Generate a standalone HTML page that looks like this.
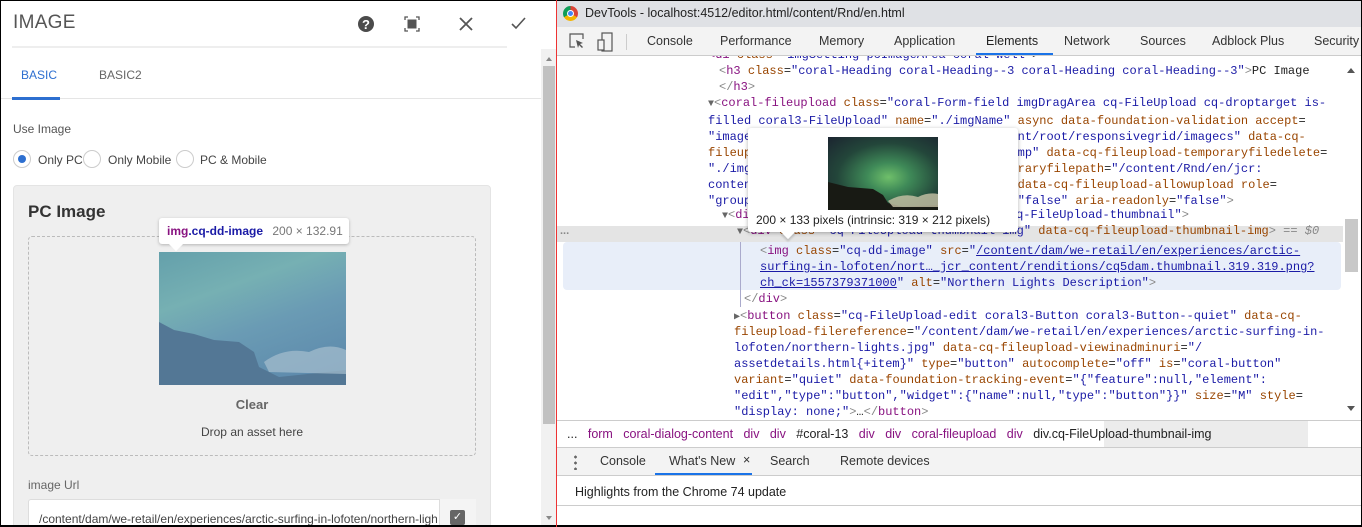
<!DOCTYPE html>
<html><head><meta charset="utf-8"><style>
*{margin:0;padding:0;box-sizing:border-box}
body{width:1362px;height:527px;overflow:hidden;background:#000;font-family:"Liberation Sans",sans-serif;position:relative}
.a{position:absolute}
#L{left:1px;top:1px;width:555px;height:524px;background:#fff;overflow:hidden}
#R{left:557px;top:1px;width:804px;height:524px;background:#fff;overflow:hidden}
.code{font-family:"Liberation Mono",monospace;font-size:12px;white-space:pre;color:#222;line-height:16px}
.t{color:#881280}.n{color:#994500}.v{color:#1a1aa6}.g{color:#888}
.u{color:#1a1aa6;text-decoration:underline}
.tri{color:#666;font-size:10px}
</style></head><body>
<div id="L" class="a">
  <div class="a" style="left:12px;top:11px;font-size:19px;color:#555;letter-spacing:0.3px">IMAGE</div>
  <svg class="a" style="left:356px;top:14px" width="18" height="18" viewBox="0 0 18 18"><circle cx="9" cy="9" r="8" fill="#4b4b4b"/><text x="9" y="14" text-anchor="middle" font-family="Liberation Sans" font-weight="bold" font-size="13" fill="#fff">?</text></svg>
  <svg class="a" style="left:403px;top:15px" width="16" height="16" viewBox="0 0 16 16"><path d="M1 4V1h3M12 1h3v3M15 12v3h-3M4 15H1v-3" stroke="#555" stroke-width="1.3" fill="none"/><rect x="3.5" y="3.5" width="9" height="9" fill="#555"/></svg>
  <svg class="a" style="left:458px;top:16px" width="14" height="14" viewBox="0 0 14 14"><path d="M1 1L13 13M13 1L1 13" stroke="#555" stroke-width="1.8"/></svg>
  <svg class="a" style="left:510px;top:16px" width="15" height="13" viewBox="0 0 15 13"><path d="M1 7l4 4L14 1" stroke="#555" stroke-width="1.6" fill="none"/></svg>
  <div class="a" style="left:11px;top:45px;width:495px;height:2px;background:#eee"></div>
  <div class="a" style="left:20px;top:67px;font-size:12px;color:#2d6fd0">BASIC</div>
  <div class="a" style="left:98px;top:67px;font-size:12px;color:#666">BASIC2</div>
  <div class="a" style="left:0;top:97px;width:540px;height:1px;background:#e5e5e5"></div>
  <div class="a" style="left:11px;top:96px;width:48px;height:3px;background:#2d6fd0"></div>
  <div class="a" style="left:12px;top:121px;font-size:12px;color:#555">Use Image</div>
  <div class="a" style="left:12px;top:149px;width:18px;height:18px;border-radius:50%;border:1px solid #ccc;background:#fff"></div>
  <div class="a" style="left:17px;top:154px;width:8px;height:8px;border-radius:50%;background:#2d6fd0"></div>
  <div class="a" style="left:37px;top:152px;font-size:12px;color:#444">Only PC</div>
  <div class="a" style="left:82px;top:149px;width:18px;height:18px;border-radius:50%;border:1px solid #ccc;background:#fff"></div>
  <div class="a" style="left:107px;top:152px;font-size:12px;color:#444">Only Mobile</div>
  <div class="a" style="left:175px;top:149px;width:18px;height:18px;border-radius:50%;border:1px solid #ccc;background:#fff"></div>
  <div class="a" style="left:199px;top:152px;font-size:12px;color:#444">PC &amp; Mobile</div>
  <div class="a" style="left:12px;top:184px;width:478px;height:360px;background:#efefef;border-radius:4px;border:1px solid #e4e4e4"></div>
  <div class="a" style="left:27px;top:201px;font-size:17px;color:#333;font-weight:bold">PC Image</div>
  <div class="a" style="left:27px;top:235px;width:448px;height:220px;border:1px dashed #bbb;border-radius:4px"></div>
  <div class="a" style="left:158px;top:251px;width:187px;height:133px;background:linear-gradient(160deg,#64a0ab 0%,#76b0b3 30%,#6a9bb4 55%,#5a85aa 100%)"></div>
  <svg class="a" style="left:158px;top:251px" width="187" height="133" viewBox="0 0 187 133"><path d="M0 70L15 78L35 82L55 88L80 90L95 100L100 115L120 125L187 118V133H0Z" fill="#537795"/><path d="M105 110Q125 95 150 100Q170 90 187 98V122L110 120Z" fill="#a6bfce" opacity=".7"/></svg>
  <div class="a" style="left:0;top:396px;width:502px;text-align:center;font-size:13px;font-weight:bold;color:#666">Clear</div>
  <div class="a" style="left:0;top:424px;width:502px;text-align:center;font-size:12px;color:#444">Drop an asset here</div>
  <div class="a" style="left:27px;top:477px;font-size:12px;color:#666">image Url</div>
  <div class="a" style="left:27px;top:498px;width:448px;height:40px;background:#fff;border:1px solid #ddd;border-radius:3px"></div>
  <div class="a" style="left:438px;top:498px;width:37px;height:40px;border-left:1px solid #ddd;background:#f4f4f4"></div>
  <div class="a" style="left:449px;top:509px;width:15px;height:15px;background:#666;border-radius:2px;color:#fff;font-size:11px;text-align:center;line-height:15px">✓</div>
  <div class="a" style="left:38px;top:511px;width:398px;overflow:hidden;white-space:nowrap;font-size:12px;color:#444">/content/dam/we-retail/en/experiences/arctic-surfing-in-lofoten/northern-lights</div>
  <div class="a" style="left:158px;top:217px;width:190px;height:26px;background:#fff;border-radius:3px;box-shadow:0 1px 3px rgba(0,0,0,.25);font-size:12px;line-height:26px;padding-left:8px;white-space:nowrap"><b style="color:#881280">img</b><b style="color:#1a1aa6">.cq-dd-image</b> <span style="color:#777;margin-left:6px">200 × 132.91</span></div>
  <div class="a" style="left:170px;top:238px;width:10px;height:10px;background:#fff;transform:rotate(45deg)"></div>
  <div class="a" style="left:540px;top:48px;width:15px;height:476px;background:#f1f1f1"></div>
  <div class="a" style="left:542px;top:65px;width:12px;height:358px;background:#c1c1c1"></div>
  <div class="a" style="left:545px;top:53px;width:0;height:0;border:3px solid transparent;border-bottom:4px solid #888"></div>
  <div class="a" style="left:545px;top:515px;width:0;height:0;border:3px solid transparent;border-top:4px solid #888"></div>
</div>
<div class="a" style="left:556px;top:0;width:1px;height:527px;background:#e33"></div>
<div id="R" class="a">
  <div class="a" style="left:0;top:0;width:804px;height:26px;background:#dfe1e5"></div>
  <div class="a" style="left:6px;top:5px;width:15px;height:15px;border-radius:50%;background:conic-gradient(#db4437 0 120deg,#f4b400 120deg 240deg,#0f9d58 240deg)"></div>
  <div class="a" style="left:10px;top:9px;width:7px;height:7px;border-radius:50%;background:#4285f4;border:1px solid #fff"></div>
  <div class="a" style="left:28px;top:5px;font-size:12.5px;color:#222">DevTools - localhost:4512/editor.html/content/Rnd/en.html</div>
  <div class="a" style="left:0;top:26px;width:804px;height:29px;background:#f3f3f3;border-bottom:1px solid #ccc"></div>
  <svg class="a" style="left:12px;top:32px" width="16" height="16" viewBox="0 0 16 16"><path d="M6 14H1V1h13v5" stroke="#555" stroke-width="1.2" fill="none"/><path d="M7 7l7 3-3 1 3 3-1 1-3-3-1 3z" fill="#555"/></svg>
  <svg class="a" style="left:40px;top:31px" width="16" height="20" viewBox="0 0 16 20"><rect x="5" y="1" width="10" height="18" stroke="#555" stroke-width="1.2" fill="none"/><rect x="1" y="8" width="6" height="10" stroke="#555" stroke-width="1.2" fill="#f3f3f3"/></svg>
  <div class="a" style="left:69px;top:33px;width:1px;height:16px;background:#ccc"></div>
  <div class="a" style="top:33px;left:0;font-size:12.5px;color:#333;white-space:nowrap">
    <span class="a" style="left:90px">Console</span><span class="a" style="left:163px">Performance</span><span class="a" style="left:262px">Memory</span><span class="a" style="left:337px">Application</span><span class="a" style="left:429px;color:#222">Elements</span><span class="a" style="left:507px">Network</span><span class="a" style="left:583px">Sources</span><span class="a" style="left:655px">Adblock Plus</span><span class="a" style="left:757px">Security</span>
  </div>
  <div class="a" style="left:419px;top:52px;width:77px;height:2px;background:#1a73e8"></div>
  <div class="a" style="left:0;top:55px;width:804px;height:364px;overflow:hidden">
   <div class="a" style="left:0;top:-55px;width:804px;height:480px">
  <div class="a" style="left:0;top:225px;width:786px;height:16px;background:#e4e4e4"></div>
  <div class="a" style="left:6px;top:241px;width:778px;height:48px;background:#e8eef9;border-radius:4px"></div>
  <div class="a" style="left:183px;top:241px;width:1px;height:65px;background:#aac"></div>
  <div class="a g" style="left:3px;top:224px;font-size:11px;font-weight:bold">...</div>
  <div class="a code" style="left:151px;top:46px"><span class="t">&lt;di</span> <span class="n">class</span>=<span class="v">"imgSetting pcImageArea coral-Well"</span>&gt;</div>
  <div class="a code" style="left:162px;top:62px"><span class="g">&lt;</span><span class="t">h3</span> <span class="n">class</span>=<span class="v">"coral-Heading coral-Heading--3 coral-Heading coral-Heading--3"</span><span class="g">&gt;</span>PC Image</div>
  <div class="a code" style="left:162px;top:78px"><span class="g">&lt;/</span><span class="t">h3</span><span class="g">&gt;</span></div>
  <div class="a code" style="left:151px;top:94px"><span class="tri">▼</span><span class="g">&lt;</span><span class="t">coral-fileupload</span> <span class="n">class</span>=<span class="v">"coral-Form-field imgDragArea cq-FileUpload cq-droptarget is-</span>
<span class="v">filled coral3-FileUpload"</span> <span class="n">name</span>=<span class="v">"./imgName"</span> <span class="n">async data-foundation-validation accept</span>=
<span class="v">"image/*"</span> <span class="n">data-cq-fileupload-target</span>=<span class="v">"/content/root/responsivegrid/imagecs"</span> <span class="n">data-cq-</span>
<span class="n">fileupload-temporaryfilename</span>=<span class="v">"./imgName.sftmp"</span> <span class="n">data-cq-fileupload-temporaryfiledelete</span>=
<span class="v">"./imgName@Delete"</span> <span class="n">data-cq-fileupload-temporaryfilepath</span>=<span class="v">"/content/Rnd/en/jcr:</span>
<span class="v">content/root/responsivegrid/imgName.sftmp"</span> <span class="n">data-cq-fileupload-allowupload</span> <span class="n">role</span>=
<span class="v">"group"</span> <span class="n">aria-required</span>=<span class="v">"false"</span> <span class="n">aria-invalid</span>=<span class="v">"false"</span> <span class="n">aria-readonly</span>=<span class="v">"false"</span><span class="g">&gt;</span></div>
  <div class="a code" style="left:165px;top:206px"><span class="tri">▼</span><span class="g">&lt;</span><span class="t">div</span> <span class="n">class</span>=<span class="v">"coral-FileUpload-thumbnail cq-FileUpload-thumbnail"</span><span class="g">&gt;</span></div>
  <div class="a code" style="left:180px;top:222px"><span class="tri">▼</span><span class="g">&lt;</span><span class="t">div</span> <span class="n">class</span>=<span class="v">"cq-FileUpload-thumbnail-img"</span> <span class="n">data-cq-fileupload-thumbnail-img</span><span class="g">&gt;</span> <span class="g"><i>== $0</i></span></div>
  <div class="a code" style="left:203px;top:242px"><span class="g">&lt;</span><span class="t">img</span> <span class="n">class</span>=<span class="v">"cq-dd-image"</span> <span class="n">src</span>=<span class="v">"</span><span class="u">/content/dam/we-retail/en/experiences/arctic-</span>
<span class="u">surfing-in-lofoten/nort…_jcr_content/renditions/cq5dam.thumbnail.319.319.png?</span>
<span class="u">ch_ck=1557379371000</span><span class="v">"</span> <span class="n">alt</span>=<span class="v">"Northern Lights Description"</span><span class="g">&gt;</span></div>
  <div class="a code" style="left:187px;top:290px"><span class="g">&lt;/</span><span class="t">div</span><span class="g">&gt;</span></div>
  <div class="a code" style="left:177px;top:307px"><span class="tri">▶</span><span class="g">&lt;</span><span class="t">button</span> <span class="n">class</span>=<span class="v">"cq-FileUpload-edit coral3-Button coral3-Button--quiet"</span> <span class="n">data-cq-</span></div>
  <div class="a code" style="left:177px;top:323px"><span class="n">fileupload-filereference</span>=<span class="v">"/content/dam/we-retail/en/experiences/arctic-surfing-in-</span>
<span class="v">lofoten/northern-lights.jpg"</span> <span class="n">data-cq-fileupload-viewinadminuri</span>=<span class="v">"/</span>
<span class="v">assetdetails.html{+item}"</span> <span class="n">type</span>=<span class="v">"button"</span> <span class="n">autocomplete</span>=<span class="v">"off"</span> <span class="n">is</span>=<span class="v">"coral-button"</span>
<span class="n">variant</span>=<span class="v">"quiet"</span> <span class="n">data-foundation-tracking-event</span>=<span class="v">"{"feature":null,"element":</span>
<span class="v">"edit","type":"button","widget":{"name":null,"type":"button"}}"</span> <span class="n">size</span>=<span class="v">"M"</span> <span class="n">style</span>=
<span class="v">"display: none;"</span><span class="g">&gt;</span>…<span class="g">&lt;/</span><span class="t">button</span><span class="g">&gt;</span></div>
   </div>
  </div>
  <div class="a" style="left:786px;top:56px;width:18px;height:363px;background:#fff"></div>
  <div class="a" style="left:788px;top:218px;width:13px;height:53px;background:#c8c8c8"></div>
  <div class="a" style="left:790px;top:63px;width:0;height:0;border:4px solid transparent;border-bottom:5px solid #555"></div>
  <div class="a" style="left:790px;top:405px;width:0;height:0;border:4px solid transparent;border-top:5px solid #555"></div>
  <div class="a" style="left:191px;top:127px;width:270px;height:104px;background:#fff;border-radius:3px;box-shadow:0 1px 4px rgba(0,0,0,.3)"></div>
  <div class="a" style="left:226px;top:226px;width:10px;height:10px;background:#fff;transform:rotate(45deg);box-shadow:2px 2px 2px rgba(0,0,0,.15)"></div>
  <div class="a" style="left:271px;top:136px;width:110px;height:73px;background:radial-gradient(ellipse at 55% 55%,#6fbf6a 0%,#3f8a58 25%,#23463a 60%,#1b2430 100%)"></div>
  <svg class="a" style="left:271px;top:136px" width="110" height="73" viewBox="0 0 110 73"><path d="M0 45L20 50L45 52L55 58L60 66L75 70L110 68V73H0Z" fill="#181a14"/><path d="M60 64Q75 55 90 60Q100 55 110 57V70L65 70Z" fill="#c9c4a8" opacity=".8"/></svg>
  <div class="a" style="left:199px;top:212px;font-size:12px;color:#222;white-space:nowrap">200 × 133 pixels (intrinsic: 319 × 212 pixels)</div>
  <div class="a" style="left:0;top:419px;width:804px;height:28px;background:#fff;border-top:1px solid #ccc;border-bottom:1px solid #ccc"></div>
  <div class="a" style="left:547px;top:420px;width:204px;height:26px;background:#ececec"></div>
  <div class="a" style="left:10px;top:426px;font-size:12.5px;white-space:nowrap;color:#881280"><span style="color:#222">...</span>&nbsp;&nbsp;&nbsp;form&nbsp;&nbsp;&nbsp;coral-dialog-content&nbsp;&nbsp;&nbsp;div&nbsp;&nbsp;&nbsp;div&nbsp;&nbsp;&nbsp;<span style="color:#222">#coral-13</span>&nbsp;&nbsp;&nbsp;div&nbsp;&nbsp;&nbsp;div&nbsp;&nbsp;&nbsp;coral-fileupload&nbsp;&nbsp;&nbsp;div&nbsp;&nbsp;&nbsp;<span style="color:#222">div.cq-FileUpload-thumbnail-img</span></div>
  <div class="a" style="left:0;top:447px;width:804px;height:28px;background:#f3f3f3;border-bottom:1px solid #ccc"></div>
  <div class="a" style="left:17px;top:453px;width:3px;height:16px;background:radial-gradient(circle,#666 1.3px,transparent 1.5px) 0 0/3px 6px"></div>
  <div class="a" style="left:43px;top:453px;font-size:12.5px;color:#333;white-space:nowrap">Console<span class="a" style="left:69px">What's New</span><span class="a" style="left:143px;top:-1px">×</span><span class="a" style="left:170px">Search</span><span class="a" style="left:240px">Remote devices</span></div>
  <div class="a" style="left:98px;top:472px;width:97px;height:2px;background:#1a73e8"></div>
  <div class="a" style="left:18px;top:484px;font-size:12.5px;color:#222">Highlights from the Chrome 74 update</div>
  <div class="a" style="left:0;top:504px;width:804px;height:1px;background:#ccc"></div>
</div>
</body></html>
